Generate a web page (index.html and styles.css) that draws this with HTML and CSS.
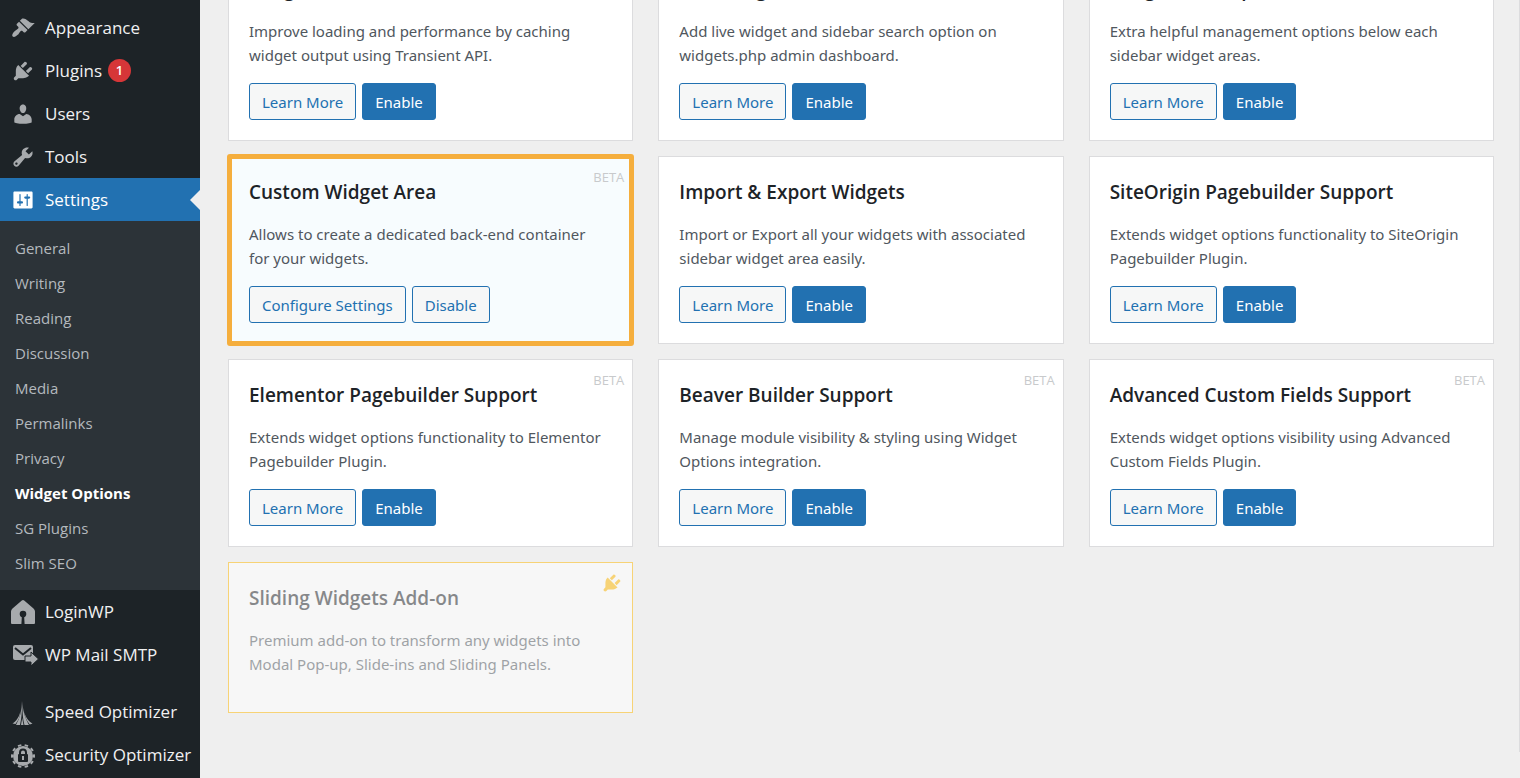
FILE: index.html
```
<!DOCTYPE html>
<html lang="en">

<head>
    <meta charset="UTF-8">
    <meta name="viewport" content="width=device-width, initial-scale=1.0">
    <title>Widget Options</title>
    <link rel="stylesheet" href="styles.css">
</head>

<body>
    <!-- shared icons -->
    <svg class="icon-defs" aria-hidden="true">
        <symbol id="icon-plug" viewBox="0 0 20 20">
            <path d="M13.11 4.36L9.87 7.6 8 5.73l3.24-3.24c.35-.34 1.05-.2 1.56.32.52.51.66 1.21.31 1.55zm-8 1.77l.91-1.12 9.01 9.01-1.19.84c-.71.71-2.63 1.16-3.82 1.16H6.14L4.9 17.26c-.59.59-1.54.59-2.12 0-.59-.58-.59-1.53 0-2.12l1.24-1.24v-3.88c0-1.13.4-3.19 1.09-3.89zm7.26 3.97l3.24-3.24c.34-.35 1.04-.21 1.55.31.52.51.66 1.21.31 1.55l-3.24 3.25z"/>
        </symbol>
    </svg>

    <nav class="sidebar">
        <ul class="menu">
            <li>
                <a href="#">
                    <svg class="icon" viewBox="0 0 20 20"><path d="M14.48 11.06L7.41 3.99l1.5-1.5c.5-.56 2.3-.47 3.51.32 1.21.8 1.43 1.28 2.91 2.1 1.18.64 2.45 1.26 4.45.85zm-.71.71L6.7 4.7 4.93 6.47c-.39.39-.39 1.02 0 1.41l1.06 1.06c.39.39.39 1.03 0 1.42-.6.6-1.43 1.11-2.21 1.69-.35.26-.7.53-1.01.84C1.43 14.23.4 16.08 1.4 17.07c.99 1 2.84-.03 4.18-1.36.31-.31.58-.66.85-1.02.57-.78 1.08-1.61 1.69-2.21.39-.39 1.02-.39 1.41 0l1.06 1.06c.39.39 1.02.39 1.41 0z"/></svg>
                    Appearance
                </a>
            </li>
            <li>
                <a href="#">
                    <svg class="icon"><use href="#icon-plug"/></svg>
                    Plugins <span class="count">1</span>
                </a>
            </li>
            <li>
                <a href="#">
                    <svg class="icon" viewBox="0 0 20 20"><path d="M10 9.25c-2.27 0-2.73-3.44-2.73-3.44C7 4.02 7.82 2 9.97 2c2.16 0 2.98 2.02 2.71 3.81 0 0-.41 3.44-2.68 3.44zm0 2.57L12.72 10c2.39 0 4.52 2.33 4.52 4.53v2.49s-3.65 1.13-7.24 1.13c-3.65 0-7.24-1.13-7.24-1.13v-2.49c0-2.25 1.94-4.48 4.47-4.48z"/></svg>
                    Users
                </a>
            </li>
            <li>
                <a href="#">
                    <svg class="icon" viewBox="0 0 20 20"><path d="M16.68 9.77c-1.34 1.34-3.3 1.67-4.95.99l-5.41 6.52c-.99.99-2.59.99-3.58 0s-.99-2.59 0-3.57l6.52-5.42c-.68-1.65-.35-3.61.99-4.95 1.28-1.28 3.12-1.62 4.72-1.06l-2.89 2.89 2.82 2.82 2.86-2.87c.53 1.58.18 3.39-1.08 4.65zM3.81 16.21c.4.39 1.04.39 1.43 0 .4-.4.4-1.04 0-1.43-.39-.4-1.03-.4-1.43 0-.39.39-.39 1.03 0 1.43z"/></svg>
                    Tools
                </a>
            </li>
            <li class="current">
                <a href="#">
                    <svg class="icon" viewBox="0 0 20 20"><path d="M18 16V4c0-.55-.45-1-1-1H3c-.55 0-1 .45-1 1v12c0 .55.45 1 1 1h14c.55 0 1-.45 1-1zM8 11h1c.55 0 1 .45 1 1s-.45 1-1 1H8v1.5c0 .28-.22.5-.5.5s-.5-.22-.5-.5V13H6c-.55 0-1-.45-1-1s.45-1 1-1h1V5.5c0-.28.22-.5.5-.5s.5.22.5.5V11zm5-2h-1c-.55 0-1-.45-1-1s.45-1 1-1h1V5.5c0-.28.22-.5.5-.5s.5.22.5.5V7h1c.55 0 1 .45 1 1s-.45 1-1 1h-1v5.5c0 .28-.22.5-.5.5s-.5-.22-.5-.5V9z"/></svg>
                    Settings
                </a>
                <ul class="submenu">
                    <li><a href="#">General</a></li>
                    <li><a href="#">Writing</a></li>
                    <li><a href="#">Reading</a></li>
                    <li><a href="#">Discussion</a></li>
                    <li><a href="#">Media</a></li>
                    <li><a href="#">Permalinks</a></li>
                    <li><a href="#">Privacy</a></li>
                    <li><a href="#" class="active">Widget Options</a></li>
                    <li><a href="#">SG Plugins</a></li>
                    <li><a href="#">Slim SEO</a></li>
                </ul>
            </li>
            <li>
                <a href="#">
                    <svg class="icon" viewBox="0 0 24 24"><path d="M10.800 0.500Q12 -0.500 13.200 0.500L22.500 8.500Q24 9.800 24 11.500V23Q24 24 23 24H13.600L13.200 17.200C14.600 16.600 15.300 15.400 15.300 14A3.300 3.300 0 0 0 8.700 14C8.700 15.400 9.400 16.600 10.800 17.200L10.400 24H1Q0 24 0 23V11.500Q0 9.800 1.500 8.500Z"/></svg>
                    LoginWP
                </a>
            </li>
            <li>
                <a href="#">
                    <svg class="icon" viewBox="0 0 24 24">
                        <rect x="2" y="2" width="20" height="15" rx="2"/>
                        <path class="cut-line" d="M4 5L12 11.500L20 5"/>
                        <path class="cut-edge" d="M14 13H20V9L27.500 16L20 23V19H14Z"/>
                    </svg>
                    WP Mail SMTP
                </a>
            </li>
            <li class="separator"></li>
            <li>
                <a href="#">
                    <svg class="icon" viewBox="0 0 24 24">
                        <path d="M11 1C11 10 9 18 5 25H9C10.500 19 11.300 10 11 1Z"/>
                        <path d="M11.500 1C11.500 10 14 18 18 25H13.500C11.800 19 11.200 10 11.500 1Z"/>
                        <path d="M9.500 10C9 16 5.500 21 1.500 23.500L4.500 24C8 20 9.500 15 9.500 10Z"/>
                        <path d="M13 10C13.500 16 17 21 21.500 23.500L18.800 24.500C15 20 13.200 15 13 10Z"/>
                        <path d="M11.200 18L10 25H12.500Z"/>
                    </svg>
                    Speed Optimizer
                </a>
            </li>
            <li>
                <a href="#">
                    <svg class="icon" viewBox="0 0 24 24">
                        <circle cx="12" cy="13" r="10"/>
                        <circle class="gear-teeth" cx="12" cy="13" r="11" pathLength="20"/>
                        <path class="cut-line" d="M9 12V9.500A3 3 0 0 1 15 9.500V12"/>
                        <rect class="cut" x="7" y="11" width="10" height="8" rx="1"/>
                        <rect x="11" y="13" width="2" height="4"/>
                    </svg>
                    Security Optimizer
                </a>
            </li>
        </ul>
    </nav>

    <main class="content">
        <div class="cards">
            <section class="card">
                <h3>Widget Cache</h3>
                <p>Improve loading and performance by caching widget output using Transient API.</p>
                <div class="actions">
                    <button class="btn">Learn More</button>
                    <button class="btn primary">Enable</button>
                </div>
            </section>
            <section class="card">
                <h3>Live Widget Search</h3>
                <p>Add live widget and sidebar search option on widgets.php admin dashboard.</p>
                <div class="actions">
                    <button class="btn">Learn More</button>
                    <button class="btn primary">Enable</button>
                </div>
            </section>
            <section class="card">
                <h3>Widget Area Options</h3>
                <p>Extra helpful management options below each sidebar widget areas.</p>
                <div class="actions">
                    <button class="btn">Learn More</button>
                    <button class="btn primary">Enable</button>
                </div>
            </section>

            <section class="card enabled">
                <span class="beta">BETA</span>
                <h3>Custom Widget Area</h3>
                <p>Allows to create a dedicated back-end container for your widgets.</p>
                <div class="actions">
                    <button class="btn">Configure Settings</button>
                    <button class="btn">Disable</button>
                </div>
            </section>
            <section class="card">
                <h3>Import &amp; Export Widgets</h3>
                <p>Import or Export all your widgets with associated sidebar widget area easily.</p>
                <div class="actions">
                    <button class="btn">Learn More</button>
                    <button class="btn primary">Enable</button>
                </div>
            </section>
            <section class="card">
                <h3>SiteOrigin Pagebuilder Support</h3>
                <p>Extends widget options functionality to SiteOrigin Pagebuilder Plugin.</p>
                <div class="actions">
                    <button class="btn">Learn More</button>
                    <button class="btn primary">Enable</button>
                </div>
            </section>

            <section class="card">
                <span class="beta">BETA</span>
                <h3>Elementor Pagebuilder Support</h3>
                <p>Extends widget options functionality to Elementor Pagebuilder Plugin.</p>
                <div class="actions">
                    <button class="btn">Learn More</button>
                    <button class="btn primary">Enable</button>
                </div>
            </section>
            <section class="card">
                <span class="beta">BETA</span>
                <h3>Beaver Builder Support</h3>
                <p>Manage module visibility &amp; styling using Widget Options integration.</p>
                <div class="actions">
                    <button class="btn">Learn More</button>
                    <button class="btn primary">Enable</button>
                </div>
            </section>
            <section class="card">
                <span class="beta">BETA</span>
                <h3>Advanced Custom Fields Support</h3>
                <p>Extends widget options visibility using Advanced Custom Fields Plugin.</p>
                <div class="actions">
                    <button class="btn">Learn More</button>
                    <button class="btn primary">Enable</button>
                </div>
            </section>

            <section class="card premium">
                <svg class="premium-icon"><use href="#icon-plug"/></svg>
                <h3>Sliding Widgets Add-on</h3>
                <p>Premium add-on to transform any widgets into Modal Pop-up, Slide-ins and Sliding Panels.</p>
            </section>
        </div>
    </main>
</body>

</html>
```
FILE: styles.css
```
* {
    margin: 0;
    padding: 0;
    box-sizing: border-box;
}

body {
    font-family: "Open Sans", "Noto Sans", sans-serif;
    font-size: 15px;
    color: #50575e;
    background-color: #efefef;
    display: flex;
    height: 100vh;
    overflow: hidden;
}

ul {
    list-style: none;
}

a {
    text-decoration: none;
}

.icon-defs {
    display: none;
}

/* Admin menu */
.sidebar {
    width: 200px;
    flex-shrink: 0;
    padding-top: 6px;
    background-color: #1d2327;
}

.menu > li > a {
    display: flex;
    align-items: center;
    height: 43px;
    padding-left: 11px;
    gap: 6px;
    font-size: 17px;
    color: #f0f0f1;
    white-space: nowrap;
}

.icon {
    width: 24px;
    height: 24px;
    margin-right: 4px;
    flex-shrink: 0;
    fill: #a7aaad;
    overflow: visible;
}

/* dark details cut out of the plugin icons */
.cut {
    fill: #1d2327;
}

.cut-line {
    fill: none;
    stroke: #1d2327;
    stroke-width: 2;
}

.cut-edge {
    stroke: #1d2327;
    stroke-width: 1;
}

.gear-teeth {
    fill: none;
    stroke: #a7aaad;
    stroke-width: 2;
    stroke-dasharray: 1 1;
    stroke-dashoffset: 0.5;
}

.count {
    width: 23px;
    height: 23px;
    border-radius: 50%;
    background-color: #d63638;
    color: #fff;
    font-size: 13px;
    font-weight: 600;
    line-height: 23px;
    text-align: center;
}

.menu > .current > a {
    position: relative;
    background-color: #2271b1;
    color: #fff;
}

.current .icon {
    fill: #fff;
}

.current > a::after {
    content: "";
    position: absolute;
    right: 0;
    border: 10px solid transparent;
    border-left: 0;
    border-right-color: #efefef;
}

.submenu {
    padding: 10px 0 9px;
    background-color: #2c3338;
}

.submenu a {
    display: block;
    padding-left: 15px;
    line-height: 35px;
    color: #b4b9be;
}

.submenu .active {
    color: #fff;
    font-weight: 700;
}

.separator {
    height: 14px;
}

/* Widget option cards */
.content {
    flex: 1;
    align-self: flex-start;
    padding: 0 25px 39px 28px;
    border-right: 1px solid #dcdcde;
}

.cards {
    display: grid;
    grid-template-columns: repeat(3, 1fr);
    align-items: start;
    gap: 15px 25px;
    margin-top: -47px; /* list is scrolled under the top edge */
}

.card {
    position: relative;
    padding: 19px 24px 20px 20px;
    background-color: #fff;
    border: 1px solid #dcdcde;
}

.card h3 {
    font-size: 19px;
    font-weight: 600;
    line-height: 32px;
    color: #1d2327;
    margin-bottom: 14px;
}

.card p {
    font-family: "Noto Sans", sans-serif;
    line-height: 24px;
}

.actions {
    display: flex;
    gap: 6px;
    margin-top: 16px;
}

.btn {
    height: 37px;
    padding: 0 12px;
    font-family: "Noto Sans", sans-serif;
    font-size: 15px;
    color: #2271b1;
    background-color: #f6f7f7;
    border: 1px solid #2271b1;
    border-radius: 3px;
    cursor: pointer;
}

.btn.primary {
    color: #fff;
    background-color: #2271b1;
}

.beta {
    position: absolute;
    top: 11px;
    right: 8px;
    font-size: 13px;
    line-height: 18px;
    color: #c8cacc;
}

.card.enabled {
    background-color: #f7fcfe;
}

.enabled::after {
    content: "";
    position: absolute;
    inset: -3px -2px;
    border: 5px solid #f5ae3d;
    border-radius: 3px;
    pointer-events: none;
}

.card.premium {
    min-height: 151px;
    border-color: #ffb900;
    opacity: 0.5;
}

.premium-icon {
    position: absolute;
    top: 9px;
    right: 9px;
    width: 22px;
    height: 22px;
    fill: #ffb900;
}
```
